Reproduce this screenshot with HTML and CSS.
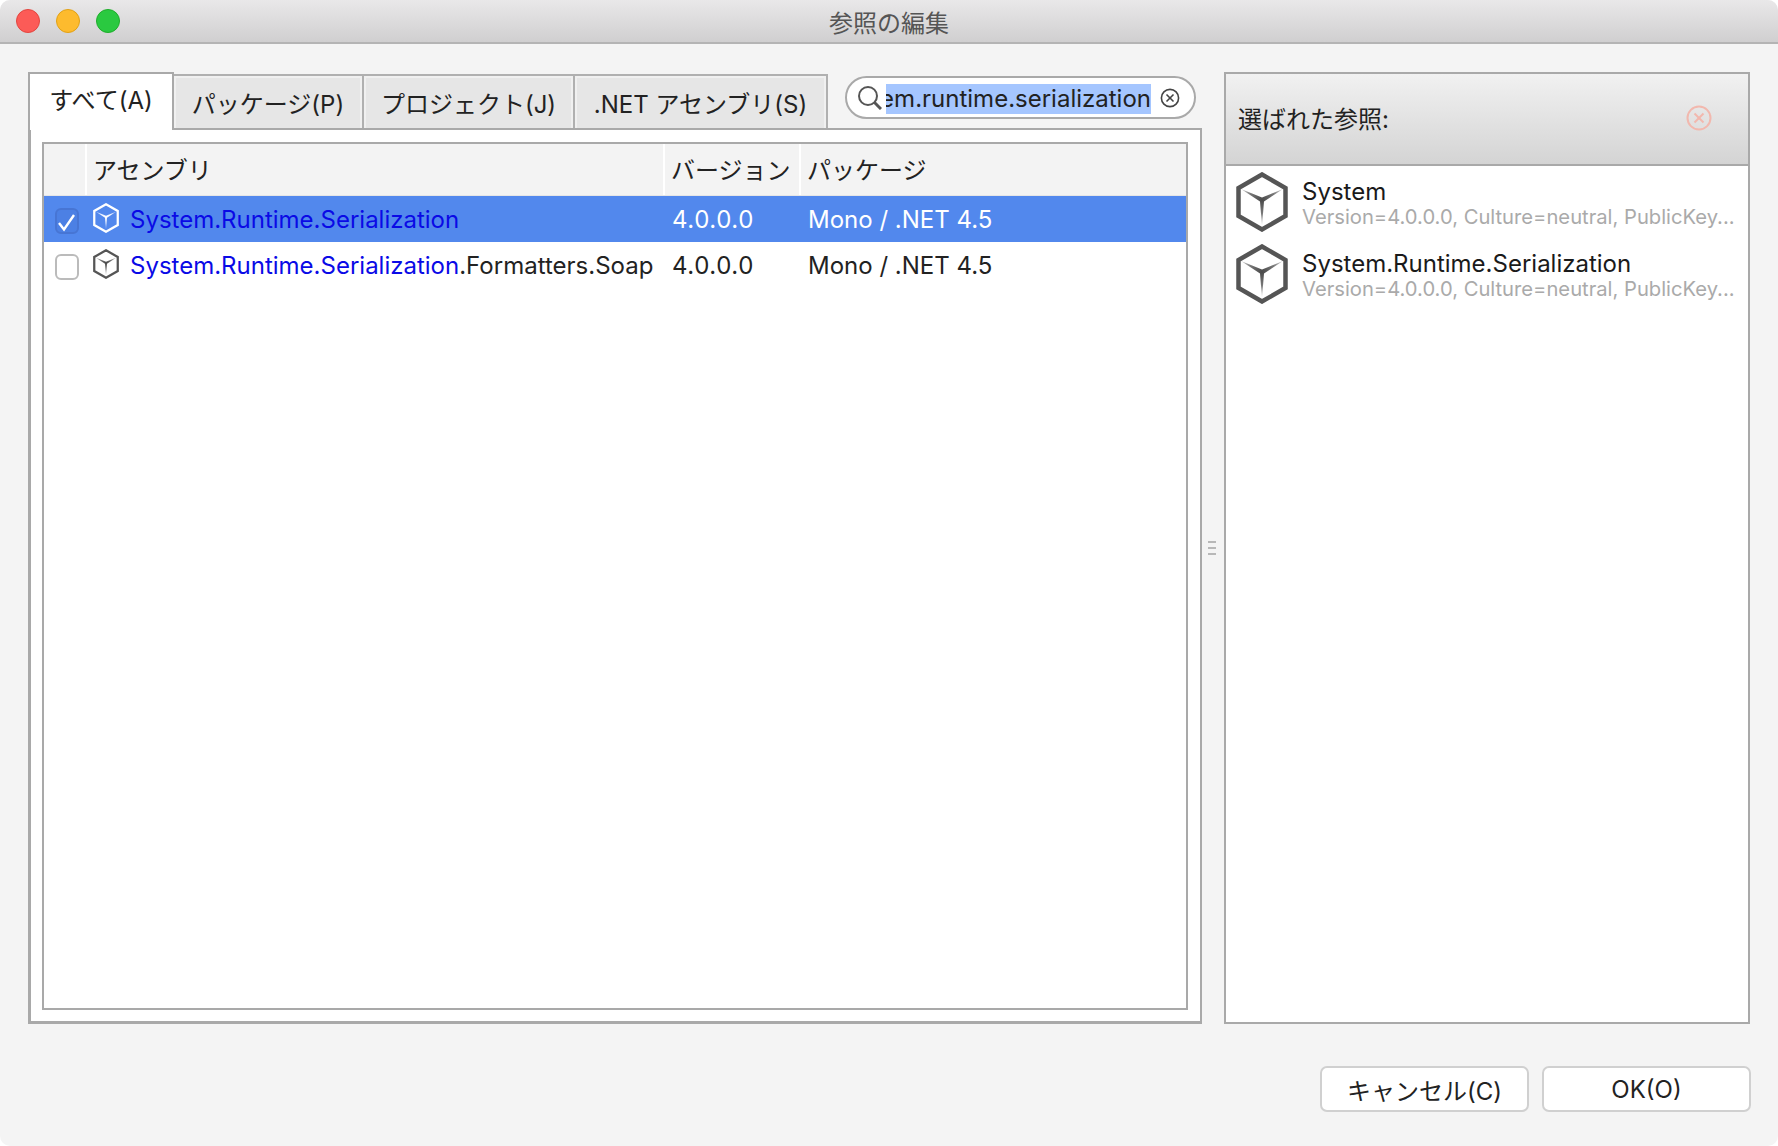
FILE: index.html
```html
<!DOCTYPE html>
<html lang="ja">
<head>
    <meta charset="UTF-8">
    <title>参照の編集</title>
    <link rel="stylesheet" href="styles.css">
</head>
<body>

<svg class="defs" width="0" height="0">
    <defs>
        <radialGradient id="spoke-dark" gradientUnits="userSpaceOnUse" cx="26" cy="28" r="26">
            <stop offset="0" stop-color="#4a4a4a"/>
            <stop offset="0.5" stop-color="#777"/>
            <stop offset="1" stop-color="#eee"/>
        </radialGradient>
        <radialGradient id="spoke-light" gradientUnits="userSpaceOnUse" cx="26" cy="28" r="26">
            <stop offset="0" stop-color="#fff"/>
            <stop offset="0.5" stop-color="#e4ecfd"/>
            <stop offset="1" stop-color="#7fa6f2"/>
        </radialGradient>
    </defs>
</svg>

<div class="window">
    <div class="titlebar">
        <div class="lights">
            <span class="light red"></span>
            <span class="light yellow"></span>
            <span class="light green"></span>
        </div>
        <div class="title">参照の編集</div>
    </div>

    <div class="content">
        <!-- Left: tabs and assembly list -->
        <div class="left-pane">
            <div class="tab-row">
                <div class="tab active">すべて(A)</div>
                <div class="tab tab-package">パッケージ(P)</div>
                <div class="tab tab-project">プロジェクト(J)</div>
                <div class="tab tab-net">.NET アセンブリ(S)</div>
                <div class="search">
                    <svg class="search-icon" viewBox="0 0 24 24">
                        <circle cx="10" cy="10" r="9"/>
                        <line class="search-handle" x1="16.5" y1="16.5" x2="23" y2="23"/>
                    </svg>
                    <div class="search-text"><span>System.runtime.serialization</span></div>
                    <svg class="clear-icon" viewBox="0 0 20 20">
                        <circle cx="10" cy="10" r="8.6"/>
                        <line x1="6.5" y1="6.5" x2="13.5" y2="13.5"/>
                        <line x1="13.5" y1="6.5" x2="6.5" y2="13.5"/>
                    </svg>
                </div>
            </div>

            <div class="tab-panel">
                <div class="table">
                    <div class="row header">
                        <div class="cell"></div>
                        <div class="cell head-name">アセンブリ</div>
                        <div class="cell head-version">バージョン</div>
                        <div class="cell head-package">パッケージ</div>
                    </div>
                    <div class="row selected">
                        <div class="cell check-cell">
                            <span class="checkbox checked">
                                <svg viewBox="0 0 20 22"><polyline points="2,13 7,19.5 17,5"/></svg>
                            </span>
                        </div>
                        <div class="cell name-cell">
                            <svg class="box-small light-box" viewBox="0 0 52 60">
                                <polygon class="box-hex" points="26,2.5 49.5,16 49.5,44 26,57.5 2.5,44 2.5,16"/>
                                <polygon fill="url(#spoke-light)" points="5,17 26,25.5 47,17 28,29.5 26,54 24,29.5"/>
                            </svg>
                            <span class="match">System.Runtime.Serialization</span>
                        </div>
                        <div class="cell version-cell">4.0.0.0</div>
                        <div class="cell package-cell">Mono / .NET 4.5</div>
                    </div>
                    <div class="row">
                        <div class="cell check-cell">
                            <span class="checkbox"></span>
                        </div>
                        <div class="cell name-cell">
                            <svg class="box-small" viewBox="0 0 52 60">
                                <polygon class="box-hex" points="26,2.5 49.5,16 49.5,44 26,57.5 2.5,44 2.5,16"/>
                                <polygon fill="url(#spoke-dark)" points="5,17 26,25.5 47,17 28,29.5 26,54 24,29.5"/>
                            </svg>
                            <span><span class="match">System.Runtime.Serialization</span>.Formatters.Soap</span>
                        </div>
                        <div class="cell version-cell">4.0.0.0</div>
                        <div class="cell package-cell">Mono / .NET 4.5</div>
                    </div>
                </div>
            </div>
        </div>

        <div class="splitter">
            <span></span>
            <span></span>
            <span></span>
        </div>

        <!-- Right: selected references -->
        <div class="right-pane">
            <div class="right-header">
                <span>選ばれた参照:</span>
                <svg class="remove-icon" viewBox="0 0 26 26">
                    <circle cx="13" cy="13" r="11.5"/>
                    <line x1="8.5" y1="8.5" x2="17.5" y2="17.5"/>
                    <line x1="17.5" y1="8.5" x2="8.5" y2="17.5"/>
                </svg>
            </div>
            <div class="ref-list">
                <div class="ref-item">
                    <svg class="box-large" viewBox="0 0 52 60">
                        <polygon class="box-hex" points="26,2.5 49.5,16 49.5,44 26,57.5 2.5,44 2.5,16"/>
                        <polygon fill="url(#spoke-dark)" points="5,17 26,25.5 47,17 28,29.5 26,54 24,29.5"/>
                    </svg>
                    <div class="ref-text">
                        <div class="ref-name">System</div>
                        <div class="ref-detail">Version=4.0.0.0, Culture=neutral, PublicKey...</div>
                    </div>
                </div>
                <div class="ref-item">
                    <svg class="box-large" viewBox="0 0 52 60">
                        <polygon class="box-hex" points="26,2.5 49.5,16 49.5,44 26,57.5 2.5,44 2.5,16"/>
                        <polygon fill="url(#spoke-dark)" points="5,17 26,25.5 47,17 28,29.5 26,54 24,29.5"/>
                    </svg>
                    <div class="ref-text">
                        <div class="ref-name">System.Runtime.Serialization</div>
                        <div class="ref-detail">Version=4.0.0.0, Culture=neutral, PublicKey...</div>
                    </div>
                </div>
            </div>
        </div>
    </div>

    <div class="footer">
        <button class="dialog-button">キャンセル(C)</button>
        <button class="dialog-button">OK(O)</button>
    </div>
</div>

</body>
</html>
```

FILE: styles.css
```css
* {
    box-sizing: border-box;
}

html, body {
    margin: 0;
    padding: 0;
    background-color: #fff;
}

body {
    font-family: Inter, "Noto Sans CJK JP", sans-serif;
    font-size: 24px;
    color: #222;
}

.defs {
    display: block;
    height: 0;
}

.window {
    width: 1778px;
    height: 1146px;
    background-color: #f4f4f4;
    border-radius: 10px;
    overflow: hidden;
    display: flex;
    flex-direction: column;
}

/* Title bar */
.titlebar {
    height: 44px;
    display: grid;
    grid-template-columns: 1fr auto 1fr;
    align-items: center;
    padding: 0 16px;
    background: linear-gradient(#e9e8e9, #d0cfd0);
    border-bottom: 2px solid #b4b4b4;
}

.lights {
    display: flex;
    gap: 16px;
}

.light {
    width: 24px;
    height: 24px;
    border-radius: 50%;
}

.red { background-color: #fc5b57; border: 1px solid #e2463f; }
.yellow { background-color: #fdbb2e; border: 1px solid #e1a116; }
.green { background-color: #2ac940; border: 1px solid #1fad2b; }

.title {
    color: #555;
    font-size: 24px;
}

/* Main area */
.content {
    display: flex;
    padding: 28px 0 0 28px;
}

.left-pane {
    width: 1174px;
    display: flex;
    flex-direction: column;
}

.tab-row {
    height: 56px;
    display: flex;
    align-items: flex-end;
}

.tab {
    height: 54px;
    display: flex;
    align-items: center;
    justify-content: center;
    background-color: #e6e6e6;
    border-top: 2px solid #b0b0b0;
    border-right: 2px solid #b0b0b0;
    box-shadow: inset 0 2px 0 #f0f0f0, inset 2px 0 0 #f0f0f0, inset -2px 0 0 #f0f0f0;
    white-space: nowrap;
    font-size: 24px;
}

.tab.active {
    position: relative;
    width: 146px;
    height: 58px;
    margin-bottom: -2px;
    padding-bottom: 7px;
    background-color: #fff;
    box-shadow: none;
    border-left: 2px solid #a9a9a9;
    border-top: 2px solid #a9a9a9;
    border-right: 2px solid #a9a9a9;
}

.tab-package { width: 190px; }
.tab-project { width: 211px; }
.tab-net { width: 253px; }

/* Search box */
.search {
    width: 351px;
    height: 43px;
    margin: 0 0 9px 17px;
    padding: 0 13px 0 11px;
    display: flex;
    align-items: center;
    background-color: #fff;
    border: 2px solid #a9a9a9;
    border-radius: 22px;
}

.search-icon {
    width: 24px;
    height: 24px;
    flex-shrink: 0;
    fill: none;
    stroke: #555;
    stroke-width: 2;
}

.search-handle {
    stroke-width: 3;
}

.search-text {
    width: 265px;
    margin-left: 4px;
    padding-top: 3px;
    display: flex;
    justify-content: flex-end;
    overflow: hidden;
    font-size: 24px;
    line-height: 30px;
}

.search-text span {
    flex-shrink: 0;
    background-color: #a5c6ff;
}

.clear-icon {
    width: 20px;
    height: 20px;
    margin-left: 9px;
    flex-shrink: 0;
    fill: none;
    stroke: #444;
    stroke-width: 1.6;
}

/* Tab panel and table */
.tab-panel {
    height: 896px;
    padding: 12px 12px 11px 11px;
    background-color: #fff;
    border: solid #a9a9a9;
    border-width: 2px 2px 3px 3px;
}

.table {
    height: 100%;
    border: 2px solid #a9a9a9;
}

.row {
    height: 46px;
    display: grid;
    grid-template-columns: 43px 578px 136px 1fr;
    align-items: center;
}

.header {
    height: 52px;
    align-items: stretch;
    background-color: #f3f3f3;
    border-bottom: 1px solid #e6e6e6;
}

.header .cell {
    display: flex;
    align-items: center;
    padding: 0 0 2px 6px;
    border-right: 2px solid #fff;
}

.header .cell:last-child {
    border-right: none;
}

.selected {
    background-color: #5288ed;
    color: #fff;
}

.check-cell {
    padding: 4px 0 0 11px;
    display: flex;
    align-items: center;
}

.checkbox {
    width: 24px;
    height: 26px;
    display: block;
    background-color: #fff;
    border: 2px solid #bbb;
    border-radius: 6px;
}

.checkbox.checked {
    background-color: #4c80e4;
    border-color: #4775d4;
}

.checkbox svg {
    display: block;
    width: 20px;
    height: 22px;
    fill: none;
    stroke: #fff;
    stroke-width: 2.4;
}

.name-cell {
    display: flex;
    align-items: center;
    padding-left: 6px;
    white-space: nowrap;
}

.box-small {
    width: 26px;
    height: 30px;
    margin-right: 11px;
    margin-top: -2px;
    flex-shrink: 0;
}

.box-hex {
    fill: none;
    stroke: #555;
    stroke-width: 4.5;
}

.light-box .box-hex {
    stroke: #fff;
}

.match {
    color: #0a0ae6;
}

.version-cell {
    padding-left: 7px;
    letter-spacing: 0.6px;
}

.package-cell {
    padding-left: 7px;
}

/* Splitter between panes */
.splitter {
    width: 22px;
    display: flex;
    flex-direction: column;
    align-items: center;
    justify-content: center;
    gap: 4px;
    padding-right: 2px;
}

.splitter span {
    width: 8px;
    height: 2px;
    background-color: #b8b8b8;
}

/* Selected references */
.right-pane {
    width: 526px;
    height: 952px;
    display: flex;
    flex-direction: column;
}

.right-header {
    height: 92px;
    display: flex;
    align-items: center;
    justify-content: space-between;
    padding: 0 36px 3px 12px;
    background: linear-gradient(#f1f1f1, #d4d4d4);
    border: 2px solid #a9a9a9;
    border-bottom: none;
}

.remove-icon {
    width: 26px;
    height: 26px;
    fill: none;
    stroke: #f2b8ae;
    stroke-width: 2;
}

.ref-list {
    flex: 1;
    background-color: #fff;
    border: 2px solid #a9a9a9;
}

.ref-item {
    height: 72px;
    display: flex;
    align-items: center;
    padding-left: 10px;
}

.box-large {
    width: 52px;
    height: 60px;
    margin-right: 14px;
    flex-shrink: 0;
}

.ref-text {
    padding-top: 2px;
    white-space: nowrap;
}

.ref-name {
    line-height: 27px;
    color: #1a1a1a;
}

.ref-detail {
    font-size: 20.2px;
    line-height: 24px;
    color: #aaa;
}

/* Bottom buttons */
.footer {
    display: flex;
    justify-content: flex-end;
    gap: 13px;
    padding: 42px 27px 0 0;
}

.dialog-button {
    width: 209px;
    height: 46px;
    background-color: #fff;
    border: 2px solid #d0d0d0;
    border-radius: 7px;
    font-family: inherit;
    font-size: 24px;
    color: #222;
    padding: 0;
}
```
